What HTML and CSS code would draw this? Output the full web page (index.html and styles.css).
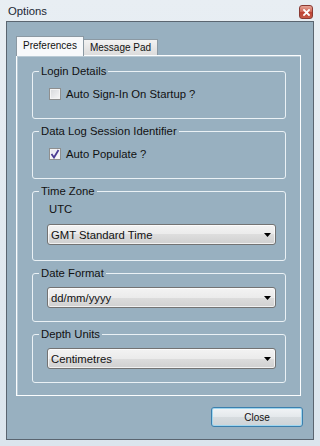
FILE: index.html
```html
<!DOCTYPE html>
<html lang="en">
<head>
<meta charset="utf-8">
<title>Options</title>
<link rel="stylesheet" href="styles.css">
</head>
<body>
<div class="window">
  <div class="titlebar">
    <span class="title">Options</span>
    <span class="close-x" aria-label="Close">
      <svg width="7" height="7" viewBox="0 0 7 7"><path d="M1 1L6 6M6 1L1 6" stroke="#fff" stroke-width="1.8" stroke-linecap="square"/></svg>
    </span>
  </div>
  <div class="client">
    <div class="tabs">
      <div class="tab active">Preferences</div>
      <div class="tab">Message Pad</div>
    </div>
    <div class="panel">
      <div class="group g-check">
        <div class="group-title">Login Details</div>
        <div class="check-row"><span class="checkbox"></span><span>Auto Sign-In On Startup ?</span></div>
      </div>
      <div class="group g-check">
        <div class="group-title">Data Log Session Identifier</div>
        <div class="check-row"><span class="checkbox checked"><svg width="10" height="10" viewBox="0 0 10 10"><path d="M1.5 5L4 8.5L8.5 1" fill="none" stroke="#4b3c93" stroke-width="1.8"/></svg></span><span>Auto Populate ?</span></div>
      </div>
      <div class="group g-tz">
        <div class="group-title">Time Zone</div>
        <div class="utc">UTC</div>
        <div class="select"><span>GMT Standard Time</span><svg class="arrow" width="7" height="4" viewBox="0 0 7 4"><path d="M0 0H7L3.5 4Z" fill="#000"/></svg></div>
      </div>
      <div class="group g-select">
        <div class="group-title">Date Format</div>
        <div class="select"><span>dd/mm/yyyy</span><svg class="arrow" width="7" height="4" viewBox="0 0 7 4"><path d="M0 0H7L3.5 4Z" fill="#000"/></svg></div>
      </div>
      <div class="group g-select">
        <div class="group-title">Depth Units</div>
        <div class="select"><span>Centimetres</span><svg class="arrow" width="7" height="4" viewBox="0 0 7 4"><path d="M0 0H7L3.5 4Z" fill="#000"/></svg></div>
      </div>
    </div>
    <div class="actions"><button class="btn">Close</button></div>
  </div>
</div>
</body>
</html>
```
FILE: styles.css
```css
* { box-sizing: border-box; }
html, body { margin: 0; padding: 0; }
body {
  width: 320px;
  height: 446px;
  overflow: hidden;
  background: #dfe8ef;
  font-family: "Liberation Sans", Arial, sans-serif;
  font-size: 11.3px;
  color: #111;
}
.window {
  display: flex;
  flex-direction: column;
  height: 446px;
  padding: 0 6px 6px 6px;
  background: linear-gradient(#e8eef3, #dbe5ed);
}
.titlebar {
  height: 21px;
  flex: none;
  display: flex;
  justify-content: space-between;
  align-items: flex-start;
  padding-left: 2px;
}
.title {
  margin-top: 4px;
  line-height: 14px;
  color: #1b2733;
}
.close-x {
  width: 14px;
  height: 14px;
  margin-top: 5px;
  margin-right: 1px;
  border: 1px solid #8a3a33;
  border-radius: 3px;
  background: linear-gradient(#e6a597, #cf6455 50%, #bd4133 51%, #c65a48);
  display: flex;
  align-items: center;
  justify-content: center;
}
.client {
  flex: 1;
  display: flex;
  flex-direction: column;
  border: 1px solid #5a6570;
  background: #98b0c0;
  padding: 14px 12px 12px 9px;
}
.tabs {
  display: flex;
  align-items: flex-end;
  height: 19px;
  flex: none;
  position: relative;
  z-index: 1;
}
.tab {
  height: 16px;
  padding: 0 6px;
  font-size: 10px;
  line-height: 15px;
  border: 1px solid #8b99a3;
  border-bottom: none;
  background: linear-gradient(#f2f2f2, #dcdcdc);
  margin-left: -1px;
}
.tab.active {
  height: 20px;
  margin-left: 0;
  margin-bottom: -1px;
  line-height: 17px;
  background: #f7f9fb;
  position: relative;
  z-index: 2;
}
.panel {
  flex: 1;
  display: flex;
  flex-direction: column;
  gap: 12px;
  border: 1px solid #fbfdfe;
  box-shadow: inset 1px 1px 0 #b9cad5;
  background: #98b0c0;
  padding: 15px 14px 12px 15px;
}
.group {
  border: 1px solid #eaf1f5;
  border-radius: 3px;
  padding: 0 9px 0 14px;
  display: flex;
  flex-direction: column;
}
.group-title {
  align-self: flex-start;
  margin: -7px 0 0 -8px;
  padding: 0 2px;
  line-height: 13px;
  background: #98b0c0;
}
.g-check { padding-bottom: 18px; }
.check-row {
  margin-top: 9px;
  height: 13px;
  display: flex;
  align-items: center;
  gap: 5px;
  padding-left: 2px;
}
.checkbox {
  width: 12px;
  height: 12px;
  border: 1px solid #8e8f8f;
  background: linear-gradient(135deg, #d6d8db, #f7f7f7);
  box-shadow: inset 0 0 0 1px #f4f4f4;
  display: flex;
  align-items: center;
  justify-content: center;
}
.checkbox.checked {
  background: linear-gradient(135deg, #e4e4ee, #fbfbfd);
}
.g-tz { padding-bottom: 15px; }
.utc {
  margin-top: 5px;
  padding-left: 2px;
  line-height: 13px;
}
.g-tz .select { margin-top: 8px; }
.g-select { padding-bottom: 13px; }
.g-select .select { margin-top: 7px; }
.select {
  height: 21px;
  border: 1px solid #737373;
  border-radius: 3px;
  background: linear-gradient(#f3f3f3, #ebebeb 50%, #dddddd 50%, #d0d0d0);
  box-shadow: inset 0 0 0 1px rgba(255,255,255,0.7);
  display: flex;
  align-items: center;
  justify-content: space-between;
  padding: 0 4px 0 3px;
}
.arrow { flex: none; }
.actions {
  flex: none;
  display: flex;
  justify-content: flex-end;
  margin-top: 11px;
  margin-right: -2px;
}
.btn {
  width: 92px;
  height: 20px;
  border: 1px solid #3b7fad;
  border-radius: 3px;
  background: linear-gradient(#f1f4f6, #e4e8eb 50%, #d7dcdf 50%, #cdd3d7);
  box-shadow: inset 0 0 0 1px #9fd6ef;
  font-family: "Liberation Sans", Arial, sans-serif;
  font-size: 10px;
  color: #111;
  padding: 0;
}
```
